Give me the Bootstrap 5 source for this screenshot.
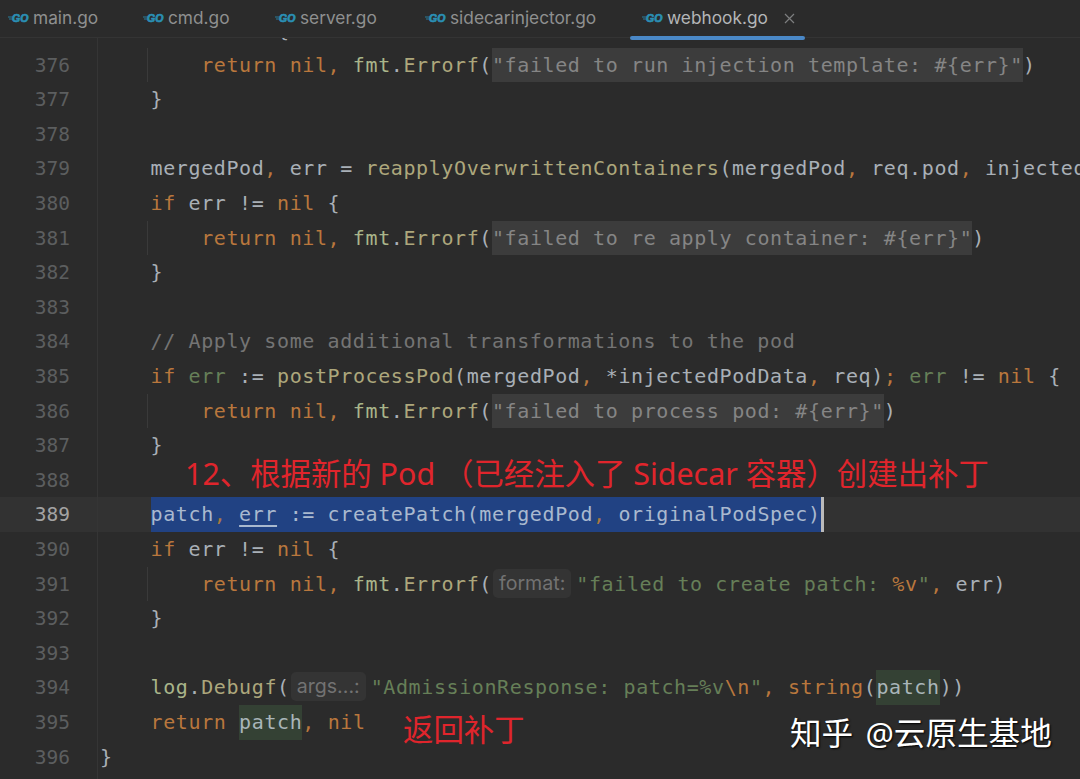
<!DOCTYPE html>
<html lang="zh">
<head>
<meta charset="utf-8">
<title>webhook.go</title>
<link href="https://cdn.jsdelivr.net/npm/bootstrap@5.3.0/dist/css/bootstrap.min.css" rel="stylesheet">
<style>
html,body{height:100%;margin:0;background:#2b2b2b;overflow:hidden}
.ide{position:relative;width:1080px;height:779px;background:#2b2b2b;overflow:hidden}
.tabbar{height:38px;border-bottom:1px solid #343434;font-family:Inter,"Noto Sans",sans-serif;font-size:17.3px;color:#8f9090;line-height:36px;padding-left:8px}
.tabitem{position:relative;height:38px;gap:3px;padding-bottom:2px}
.tabitem.t1{width:135px}.tabitem.t2{width:132px}.tabitem.t3{width:150px}.tabitem.t4{width:217px}
.tabitem.on{color:#b4b6b8}
.tabitem.on::after{content:"";position:absolute;left:-12px;width:175px;bottom:-2px;height:4px;background:#4a88c7;border-radius:2px}
.closex{margin-left:13px}
.goico{width:22px;height:14px;flex:none}
.goico text{font:italic 900 10.5px "Liberation Sans",sans-serif;fill:#2a8fb4;stroke:#2a8fb4;stroke-width:.7}
.goico line{stroke:#2a7e9c;stroke-width:1}
.codefont{font-family:"DejaVu Sans Mono","Liberation Mono",monospace;font-size:20px;letter-spacing:.6px;line-height:34.6px;color:#a9b0b7}
.ln{height:34.6px;overflow:hidden}
.clip{height:9.7px}
.clip .cell{margin-top:-24.9px;height:34.6px}
.gut{width:98px;flex:none;border-right:1px solid #353535;padding:1px 27px 0 0;text-align:right;color:#5c5e5f;letter-spacing:0;font-size:19.5px}
.cell{padding-left:2px;flex:1;min-width:0;white-space:pre}
.guided .cell{background:linear-gradient(#3a3a3a,#3a3a3a) 49px 0/1px 100% no-repeat}
.now{background:#323232}
.now .gut{color:#a3a3a3}
.kw{color:#b9773d}
.pkg{color:#a9b58a}
.fn{color:#ada77c}
.str{color:#667f58}
.gs{display:inline-block;background:#3c3c3c;color:#858585}
.cm{color:#747474}
.fmtv{color:#b9773d}
.sel{display:inline-block;background:#214283;color:#a9b9cf;border-right:3px solid #bbb}
.sel .cm2{color:#a9793f}
.sel u{text-underline-offset:4px}
.same{display:inline-block;background:#344134;color:#a9b5b9}
.hint{display:inline-block;font-family:Inter,"Noto Sans",sans-serif;font-size:19.6px;letter-spacing:0;color:#727272;background:#343434;border-radius:5px;line-height:29px;padding:0 6px;margin:0 5px 0 1px;vertical-align:1px}
.redtxt,.wm{position:absolute;white-space:pre;font-family:"Noto Sans","Noto Sans CJK SC",sans-serif;line-height:1.2}
.redtxt{color:#e0252c;font-size:30.4px}
.r1{left:185px;top:456px}
.r2{left:403px;top:712px}
.wm{left:790px;top:714px;color:#fff;font-size:31.6px;word-spacing:4px;text-shadow:1px 1px 2px #000}
</style>
</head>
<body>
<div class="ide d-flex flex-column">
  <div class="tabbar d-flex">
    <div class="tabitem t1 d-flex align-items-center"><svg class="goico" viewBox="0 0 22 14"><line x1="0" y1="6" x2="5" y2="6"/><line x1="1" y1="8" x2="5" y2="8"/><text x="4" y="11">GO</text></svg><span>main.go</span></div>
    <div class="tabitem t2 d-flex align-items-center"><svg class="goico" viewBox="0 0 22 14"><line x1="0" y1="6" x2="5" y2="6"/><line x1="1" y1="8" x2="5" y2="8"/><text x="4" y="11">GO</text></svg><span>cmd.go</span></div>
    <div class="tabitem t3 d-flex align-items-center"><svg class="goico" viewBox="0 0 22 14"><line x1="0" y1="6" x2="5" y2="6"/><line x1="1" y1="8" x2="5" y2="8"/><text x="4" y="11">GO</text></svg><span>server.go</span></div>
    <div class="tabitem t4 d-flex align-items-center"><svg class="goico" viewBox="0 0 22 14"><line x1="0" y1="6" x2="5" y2="6"/><line x1="1" y1="8" x2="5" y2="8"/><text x="4" y="11">GO</text></svg><span>sidecarinjector.go</span></div>
    <div class="tabitem on d-flex align-items-center"><svg class="goico" viewBox="0 0 22 14"><line x1="0" y1="6" x2="5" y2="6"/><line x1="1" y1="8" x2="5" y2="8"/><text x="4" y="11">GO</text></svg><span>webhook.go</span><svg class="closex" width="11" height="11" viewBox="0 0 11 11"><path d="M1 1l9 9M10 1l-9 9" stroke="#7d7e7f" stroke-width="1.2" fill="none"/></svg></div>
  </div>
  <div class="codefont flex-grow-1">
    <div class="ln clip d-flex"><div class="gut"></div><div class="cell">              {</div></div>
    <div class="ln guided d-flex"><div class="gut">376</div><div class="cell">        <span class="kw">return nil,</span> <span class="pkg">fmt</span>.<span class="fn">Errorf</span>(<span class="gs">"failed to run injection template: #{err}"</span>)</div></div>
    <div class="ln d-flex"><div class="gut">377</div><div class="cell">    }</div></div>
    <div class="ln d-flex"><div class="gut">378</div><div class="cell"></div></div>
    <div class="ln d-flex"><div class="gut">379</div><div class="cell">    mergedPod<span class="kw">,</span> err = <span class="fn">reapplyOverwrittenContainers</span>(mergedPod<span class="kw">,</span> req.pod<span class="kw">,</span> injectedPodData)</div></div>
    <div class="ln d-flex"><div class="gut">380</div><div class="cell">    <span class="kw">if</span> err != <span class="kw">nil</span> {</div></div>
    <div class="ln guided d-flex"><div class="gut">381</div><div class="cell">        <span class="kw">return nil,</span> <span class="pkg">fmt</span>.<span class="fn">Errorf</span>(<span class="gs">"failed to re apply container: #{err}"</span>)</div></div>
    <div class="ln d-flex"><div class="gut">382</div><div class="cell">    }</div></div>
    <div class="ln d-flex"><div class="gut">383</div><div class="cell"></div></div>
    <div class="ln d-flex"><div class="gut">384</div><div class="cell">    <span class="cm">// Apply some additional transformations to the pod</span></div></div>
    <div class="ln d-flex"><div class="gut">385</div><div class="cell">    <span class="kw">if</span> <span class="str">err</span> := <span class="fn">postProcessPod</span>(mergedPod<span class="kw">,</span> *injectedPodData<span class="kw">,</span> req)<span class="kw">;</span> <span class="str">err</span> != <span class="kw">nil</span> {</div></div>
    <div class="ln guided d-flex"><div class="gut">386</div><div class="cell">        <span class="kw">return nil,</span> <span class="pkg">fmt</span>.<span class="fn">Errorf</span>(<span class="gs">"failed to process pod: #{err}"</span>)</div></div>
    <div class="ln d-flex"><div class="gut">387</div><div class="cell">    }</div></div>
    <div class="ln d-flex"><div class="gut">388</div><div class="cell"></div></div>
    <div class="ln now d-flex"><div class="gut">389</div><div class="cell">    <span class="sel">patch<span class="cm2">,</span> <u>err</u> := createPatch(mergedPod<span class="cm2">,</span> originalPodSpec)</span></div></div>
    <div class="ln d-flex"><div class="gut">390</div><div class="cell">    <span class="kw">if</span> err != <span class="kw">nil</span> {</div></div>
    <div class="ln guided d-flex"><div class="gut">391</div><div class="cell">        <span class="kw">return nil,</span> <span class="pkg">fmt</span>.<span class="fn">Errorf</span>(<span class="hint">format:</span><span class="str">"failed to create patch: <span class="fmtv">%v</span>"</span><span class="kw">,</span> err)</div></div>
    <div class="ln d-flex"><div class="gut">392</div><div class="cell">    }</div></div>
    <div class="ln d-flex"><div class="gut">393</div><div class="cell"></div></div>
    <div class="ln d-flex"><div class="gut">394</div><div class="cell">    <span class="pkg">log</span>.<span class="fn">Debugf</span>(<span class="hint">args...:</span><span class="str">"AdmissionResponse: patch=%v<span class="kw">\n</span>"</span><span class="kw">,</span> <span class="kw">string</span>(<span class="same">patch</span>))</div></div>
    <div class="ln d-flex"><div class="gut">395</div><div class="cell">    <span class="kw">return</span> <span class="same">patch</span><span class="kw">,</span> <span class="kw">nil</span></div></div>
    <div class="ln d-flex"><div class="gut">396</div><div class="cell">}</div></div>
    <div class="ln d-flex"><div class="gut"></div><div class="cell"></div></div>
  </div>
  <div class="redtxt r1">12、根据新的 Pod （已经注入了 Sidecar 容器）创建出补丁</div>
  <div class="redtxt r2">返回补丁</div>
  <div class="wm">知乎 @云原生基地</div>
</div>
<script src="https://cdn.jsdelivr.net/npm/bootstrap@5.3.0/dist/js/bootstrap.bundle.min.js"></script>
</body>
</html>
